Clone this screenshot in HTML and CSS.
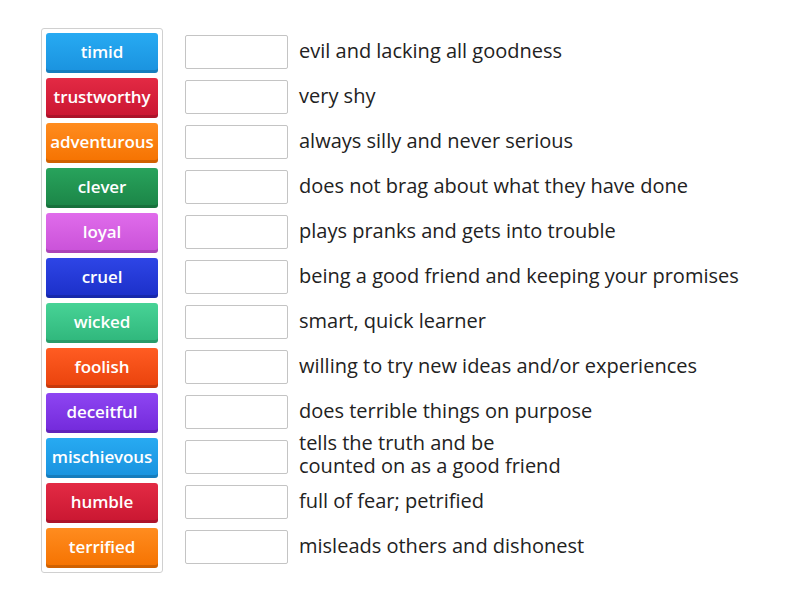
FILE: index.html
```html
<!DOCTYPE html>
<html lang="en">
<head>
    <meta charset="UTF-8">
    <meta name="viewport" content="width=device-width, initial-scale=1.0">
    <title>Match Up</title>
    <link rel="stylesheet" href="styles.css">
</head>
<body>
    <div class="game">
        <!-- Word tiles -->
        <div class="tiles">
            <div class="tile blue">timid</div>
            <div class="tile red">trustworthy</div>
            <div class="tile orange">adventurous</div>
            <div class="tile green">clever</div>
            <div class="tile pink">loyal</div>
            <div class="tile navy">cruel</div>
            <div class="tile mint">wicked</div>
            <div class="tile flame">foolish</div>
            <div class="tile purple">deceitful</div>
            <div class="tile blue">mischievous</div>
            <div class="tile red">humble</div>
            <div class="tile orange">terrified</div>
        </div>

        <!-- Drop boxes and definitions -->
        <div class="answers">
            <div class="row"><div class="slot"></div><div class="clue">evil and lacking all goodness</div></div>
            <div class="row"><div class="slot"></div><div class="clue">very shy</div></div>
            <div class="row"><div class="slot"></div><div class="clue">always silly and never serious</div></div>
            <div class="row"><div class="slot"></div><div class="clue">does not brag about what they have done</div></div>
            <div class="row"><div class="slot"></div><div class="clue">plays pranks and gets into trouble</div></div>
            <div class="row"><div class="slot"></div><div class="clue">being a good friend and keeping your promises</div></div>
            <div class="row"><div class="slot"></div><div class="clue">smart, quick learner</div></div>
            <div class="row"><div class="slot"></div><div class="clue">willing to try new ideas and/or experiences</div></div>
            <div class="row"><div class="slot"></div><div class="clue">does terrible things on purpose</div></div>
            <div class="row"><div class="slot"></div><div class="clue two-line">tells the truth and be<br>counted on as a good friend</div></div>
            <div class="row"><div class="slot"></div><div class="clue">full of fear; petrified</div></div>
            <div class="row"><div class="slot"></div><div class="clue">misleads others and dishonest</div></div>
        </div>
    </div>
</body>
</html>
```

FILE: styles.css
```css
* {
    box-sizing: border-box;
}

body {
    margin: 0;
    background: #fff;
    font-family: "Open Sans", Lato, sans-serif;
}

.game {
    display: flex;
    align-items: flex-start;
    padding: 28px 0 0 41px;
}

.tiles {
    width: 122px;
    padding: 4px;
    border: 1px solid #d0d0d0;
    border-radius: 3px;
    display: flex;
    flex-direction: column;
    gap: 5px;
}

.tile {
    height: 40px;
    padding-bottom: 3px;
    border-radius: 3px;
    color: #fff;
    font-size: 17px;
    font-weight: 600;
    letter-spacing: -0.1px;
    display: flex;
    align-items: center;
    justify-content: center;
    white-space: nowrap;
    box-shadow: inset 0 -3px 0 rgba(0, 0, 0, 0.15);
}

.blue { background: linear-gradient(#27aaf2, #1a92de); }
.red { background: linear-gradient(#e32a44, #c91631); }
.orange { background: linear-gradient(#ff8c1f, #f57200); }
.green { background: linear-gradient(#28a35c, #1b8446); }
.pink { background: linear-gradient(#e06ceb, #c951d8); }
.navy { background: linear-gradient(#2e45e6, #1b2fc8); }
.mint { background: linear-gradient(#47d396, #2fb67b); }
.flame { background: linear-gradient(#ff5c22, #e9420c); }
.purple { background: linear-gradient(#8e45f2, #7229da); }

.answers {
    display: flex;
    flex-direction: column;
    gap: 5px;
    margin-left: 22px;
    padding-top: 4px;
}

.row {
    height: 40px;
    display: flex;
    align-items: center;
}

.slot {
    width: 103px;
    height: 34px;
    border: 1px solid #c4c4c4;
    border-radius: 2px;
    flex-shrink: 0;
}

.clue {
    margin-left: 11px;
    margin-top: -3px;
    font-size: 20px;
    line-height: 23px;
    color: #222;
    white-space: nowrap;
}

.two-line {
    margin-top: -6px;
}
```
